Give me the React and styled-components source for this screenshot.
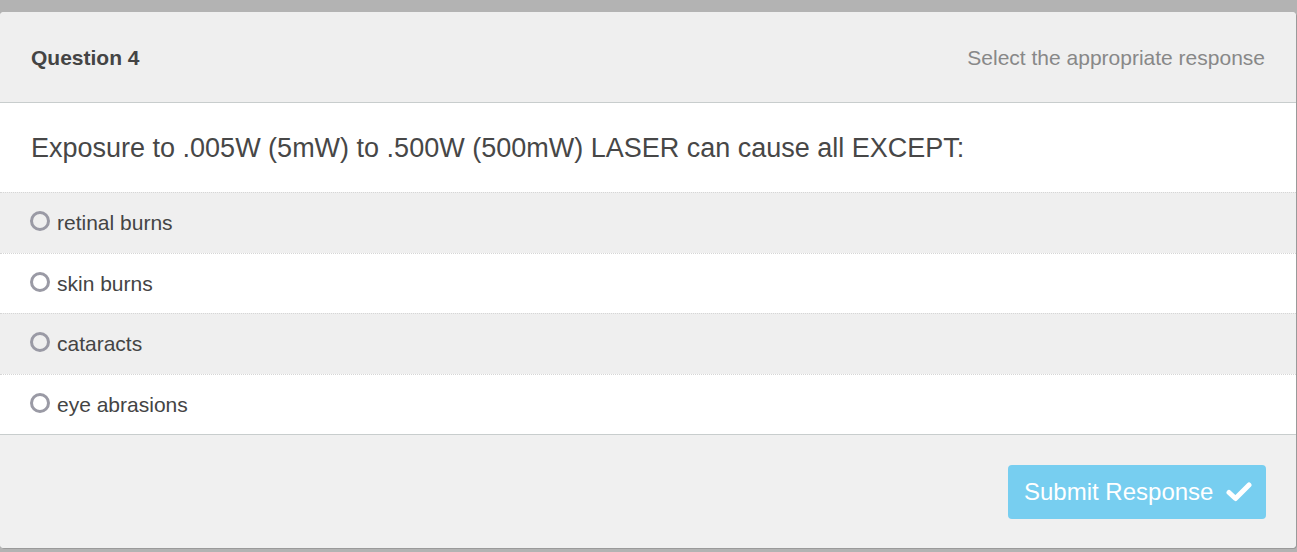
import React, { useState } from "react";
import styled, { createGlobalStyle } from "styled-components";

const GlobalStyle = createGlobalStyle`
  html, body {
    margin: 0;
    padding: 0;
    background: #b3b3b3;
    font-family: "Liberation Sans", Arial, Helvetica, sans-serif;
  }
  #root {
    padding: 12px 1px 3px 0;
  }
`;

const Card = styled.div`
  height: 536px;
  display: flex;
  flex-direction: column;
  background: #f0f0f0;
  border-radius: 4px;
  box-shadow: 1px 1px 0 #9a9a9a;
  overflow: hidden;
`;

const Header = styled.div`
  height: 91px;
  flex: none;
  display: flex;
  align-items: center;
  justify-content: space-between;
  padding: 2px 31px 0;
  box-sizing: border-box;
  background: #efefef;
  border-bottom: 1px solid #c8cdcd;
`;

const Title = styled.div`
  font-size: 21px;
  font-weight: bold;
  color: #444;
`;

const Hint = styled.div`
  font-size: 21px;
  color: #888;
`;

const Prompt = styled.div`
  height: 89px;
  flex: none;
  display: flex;
  align-items: center;
  padding: 1px 31px 0;
  box-sizing: border-box;
  background: #fff;
  font-size: 27px;
  color: #474747;
`;

const Options = styled.div`
  display: flex;
  flex-direction: column;
`;

const Option = styled.label`
  height: 60.5px;
  box-sizing: border-box;
  display: flex;
  align-items: center;
  gap: 7px;
  padding: 1px 30px 0;
  border-top: 1px dotted #d6d6d6;
  background: ${(p) => (p.$shaded ? "#efefef" : "#fff")};
  font-size: 21px;
  color: #444;
  cursor: pointer;
`;

const Radio = styled.span`
  width: 14px;
  height: 14px;
  flex: none;
  margin-top: -4px;
  border: 3px solid #9a9aa5;
  border-radius: 50%;
  background: ${(p) => (p.$checked ? "#9a9aa5" : "transparent")};
  box-shadow: ${(p) => (p.$checked ? "inset 0 0 0 3px #fff" : "none")};
`;

const Footer = styled.div`
  flex: 1;
  display: flex;
  align-items: center;
  justify-content: flex-end;
  padding: 0 30px 0 0;
  background: #f0f0f0;
  border-top: 1px solid #c8cdcd;
`;

const SubmitButton = styled.button`
  width: 258px;
  height: 54px;
  box-sizing: border-box;
  display: flex;
  align-items: center;
  justify-content: space-between;
  padding: 0 14px 0 16px;
  border: none;
  border-radius: 4px;
  background: #77cef0;
  color: #fff;
  font-family: inherit;
  font-size: 24px;
  white-space: nowrap;
  cursor: pointer;
`;

const answers = ["retinal burns", "skin burns", "cataracts", "eye abrasions"];

const Check = () => (
  <svg width="26" height="20" viewBox="0 0 26 20">
    <path
      d="M3 10.5 L9.5 16.5 L23 3"
      fill="none"
      stroke="#fff"
      strokeWidth="5"
      strokeLinecap="round"
      strokeLinejoin="round"
    />
  </svg>
);

const App = () => {
  const [picked, setPicked] = useState(null);

  return (
    <>
      <GlobalStyle />
      <Card>
        <Header>
          <Title>Question 4</Title>
          <Hint>Select the appropriate response</Hint>
        </Header>
        <Prompt>
          Exposure to .005W (5mW) to .500W (500mW) LASER can cause all EXCEPT:
        </Prompt>
        <Options>
          {answers.map((a, i) => (
            <Option key={a} $shaded={i % 2 === 0} onClick={() => setPicked(i)}>
              <Radio $checked={picked === i} />
              {a}
            </Option>
          ))}
        </Options>
        <Footer>
          <SubmitButton>
            Submit Response
            <Check />
          </SubmitButton>
        </Footer>
      </Card>
    </>
  );
};

export default App;
